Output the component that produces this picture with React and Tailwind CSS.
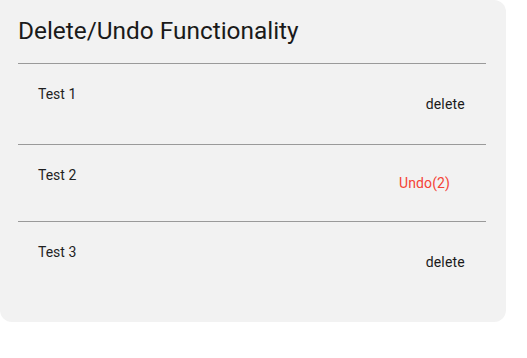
export default function App() {
  const font = { fontFamily: "Roboto, 'Liberation Sans', sans-serif" };
  return (
    <div className="w-[527px] h-[358px] bg-white" style={font}>
      <div className="w-[506px] h-[322px] bg-[#f2f2f2] rounded-tr-[12px] rounded-b-[12px] pl-[18px] pr-[20px] pt-[15px]">
        <h1 className="text-[24.4px] leading-[32px] text-[#1a1a1a] h-[48px]">Delete/Undo Functionality</h1>
        <div className="border-t border-[#9a9a9a]">
          <div className="h-[80px] flex items-start justify-between pl-[20px] pr-[21px] pt-[20px] text-[14px] leading-[20px] text-[#1f1f1f]">
            <span>Test 1</span>
            <button className="mt-[10px] tracking-[0.2px] text-[#1a1a1a]">delete</button>
          </div>
        </div>
        <div className="border-t border-[#9a9a9a]">
          <div className="h-[76px] flex items-start justify-between pl-[20px] pr-[36px] pt-[20px] text-[14px] leading-[20px] text-[#1f1f1f]">
            <span>Test 2</span>
            <button className="mt-[8px] tracking-[0.1px] text-[#f44336]">Undo(2)</button>
          </div>
        </div>
        <div className="border-t border-[#9a9a9a]">
          <div className="flex items-start justify-between pl-[20px] pr-[21px] pt-[20px] text-[14px] leading-[20px] text-[#1f1f1f]">
            <span>Test 3</span>
            <button className="mt-[10px] tracking-[0.2px] text-[#1a1a1a]">delete</button>
          </div>
        </div>
      </div>
    </div>
  );
}
